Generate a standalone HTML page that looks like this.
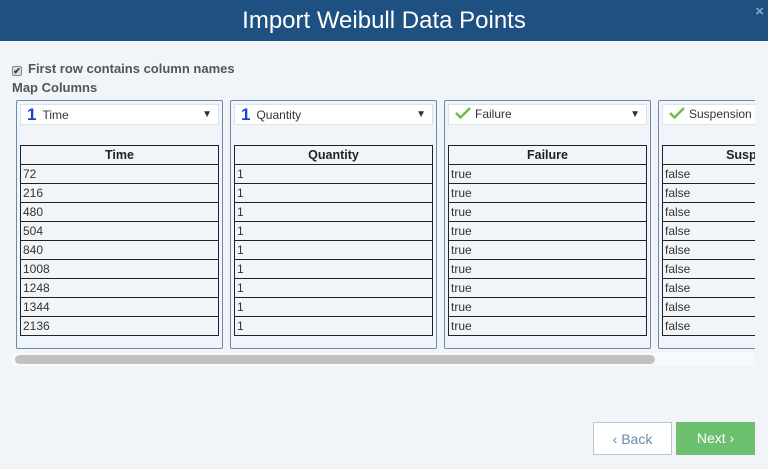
<!DOCTYPE html>
<html><head><style>
*{box-sizing:border-box;margin:0;padding:0}
body{width:768px;height:469px;background:#f1f4f8;font-family:"Liberation Sans",sans-serif;position:relative;overflow:hidden;color:#222}
.hdr{position:absolute;left:0;top:0;width:768px;height:41px;background:#1e5081;color:#fff;font-size:24px;text-align:center;line-height:41px}
.x{position:absolute;right:4px;top:4px;color:#8aa5c0;font-size:15px;line-height:15px;font-weight:bold}
.chk{position:absolute;left:12px;top:61px;font-size:13px;font-weight:bold;color:#555}
.chk span{display:inline-block;width:10px;height:10px;border:1px solid #888;border-radius:2px;background:#ddd;vertical-align:-1px;margin-right:6px;font-size:9px;line-height:9px;text-align:center;color:#333}
.map{position:absolute;left:12px;top:80px;font-size:13px;font-weight:bold;color:#555}
.clip{position:absolute;left:0;top:95px;width:755px;height:260px;overflow:hidden}
.panel{position:absolute;top:5px;width:207px;height:249px;border:1px solid #6d8aa6;border-radius:2px}
.dd{position:absolute;left:3px;top:3px;width:199px;height:21px;background:#fff;border:1px solid #dde3ea;font-size:12px;line-height:19px;padding-left:6px;color:#333}
.dd .n{color:#1a44d0;font-weight:bold;font-size:17px;margin-right:6px;vertical-align:-1px}
.dd .a{position:absolute;right:6px;top:0;font-size:10px}
table{position:absolute;left:3px;top:44px;width:199px;border-collapse:collapse;font-size:12px}
td,th{border:1px solid #222;height:19px;padding:0 2px;text-align:left;font-weight:normal;color:#333}
th{text-align:center;font-weight:bold;font-size:12.5px;color:#222}
.sb{position:absolute;left:12px;top:353px;width:743px;height:13px;background:#f8f9fb}
.sb div{position:absolute;left:3px;top:2px;width:640px;height:9px;border-radius:5px;background:#c1c1c1}
.btn{position:absolute;top:422px;height:33px;width:79px;font-size:14px;text-align:center;line-height:32px}
</style></head><body>
<div class="hdr">Import Weibull Data Points</div><div class="x">×</div>
<div class="chk"><span>✔</span>First row contains column names</div>
<div class="map">Map Columns</div>
<div class="clip">
<div class="panel" style="left:16px"><div class="dd"><span class="n">1</span>Time<span class="a">▼</span></div>
<table><tr><th>Time</th></tr><tr><td>72</td></tr><tr><td>216</td></tr><tr><td>480</td></tr><tr><td>504</td></tr><tr><td>840</td></tr><tr><td>1008</td></tr><tr><td>1248</td></tr><tr><td>1344</td></tr><tr><td>2136</td></tr></table></div>
<div class="panel" style="left:230px"><div class="dd"><span class="n">1</span>Quantity<span class="a">▼</span></div>
<table><tr><th>Quantity</th></tr><tr><td>1</td></tr><tr><td>1</td></tr><tr><td>1</td></tr><tr><td>1</td></tr><tr><td>1</td></tr><tr><td>1</td></tr><tr><td>1</td></tr><tr><td>1</td></tr><tr><td>1</td></tr></table></div>
<div class="panel" style="left:444px"><div class="dd"><svg width="16" height="12" style="vertical-align:-1px;margin-right:4px"><path d="M1 6 L5.5 10.5 L15 1" stroke="#6abf4b" stroke-width="2.5" fill="none"/></svg>Failure<span class="a">▼</span></div>
<table><tr><th>Failure</th></tr><tr><td>true</td></tr><tr><td>true</td></tr><tr><td>true</td></tr><tr><td>true</td></tr><tr><td>true</td></tr><tr><td>true</td></tr><tr><td>true</td></tr><tr><td>true</td></tr><tr><td>true</td></tr></table></div>
<div class="panel" style="left:658px"><div class="dd"><svg width="16" height="12" style="vertical-align:-1px;margin-right:4px"><path d="M1 6 L5.5 10.5 L15 1" stroke="#6abf4b" stroke-width="2.5" fill="none"/></svg>Suspension<span class="a">▼</span></div>
<table><tr><th>Suspension</th></tr><tr><td>false</td></tr><tr><td>false</td></tr><tr><td>false</td></tr><tr><td>false</td></tr><tr><td>false</td></tr><tr><td>false</td></tr><tr><td>false</td></tr><tr><td>false</td></tr><tr><td>false</td></tr></table></div>
</div>
<div class="sb"><div></div></div>
<div class="btn" style="left:593px;background:#fff;border:1px solid #b9c7d4;color:#6a8aa6">‹ Back</div>
<div class="btn" style="left:676px;background:#6dc06e;color:#fff">Next ›</div>
</body></html>
